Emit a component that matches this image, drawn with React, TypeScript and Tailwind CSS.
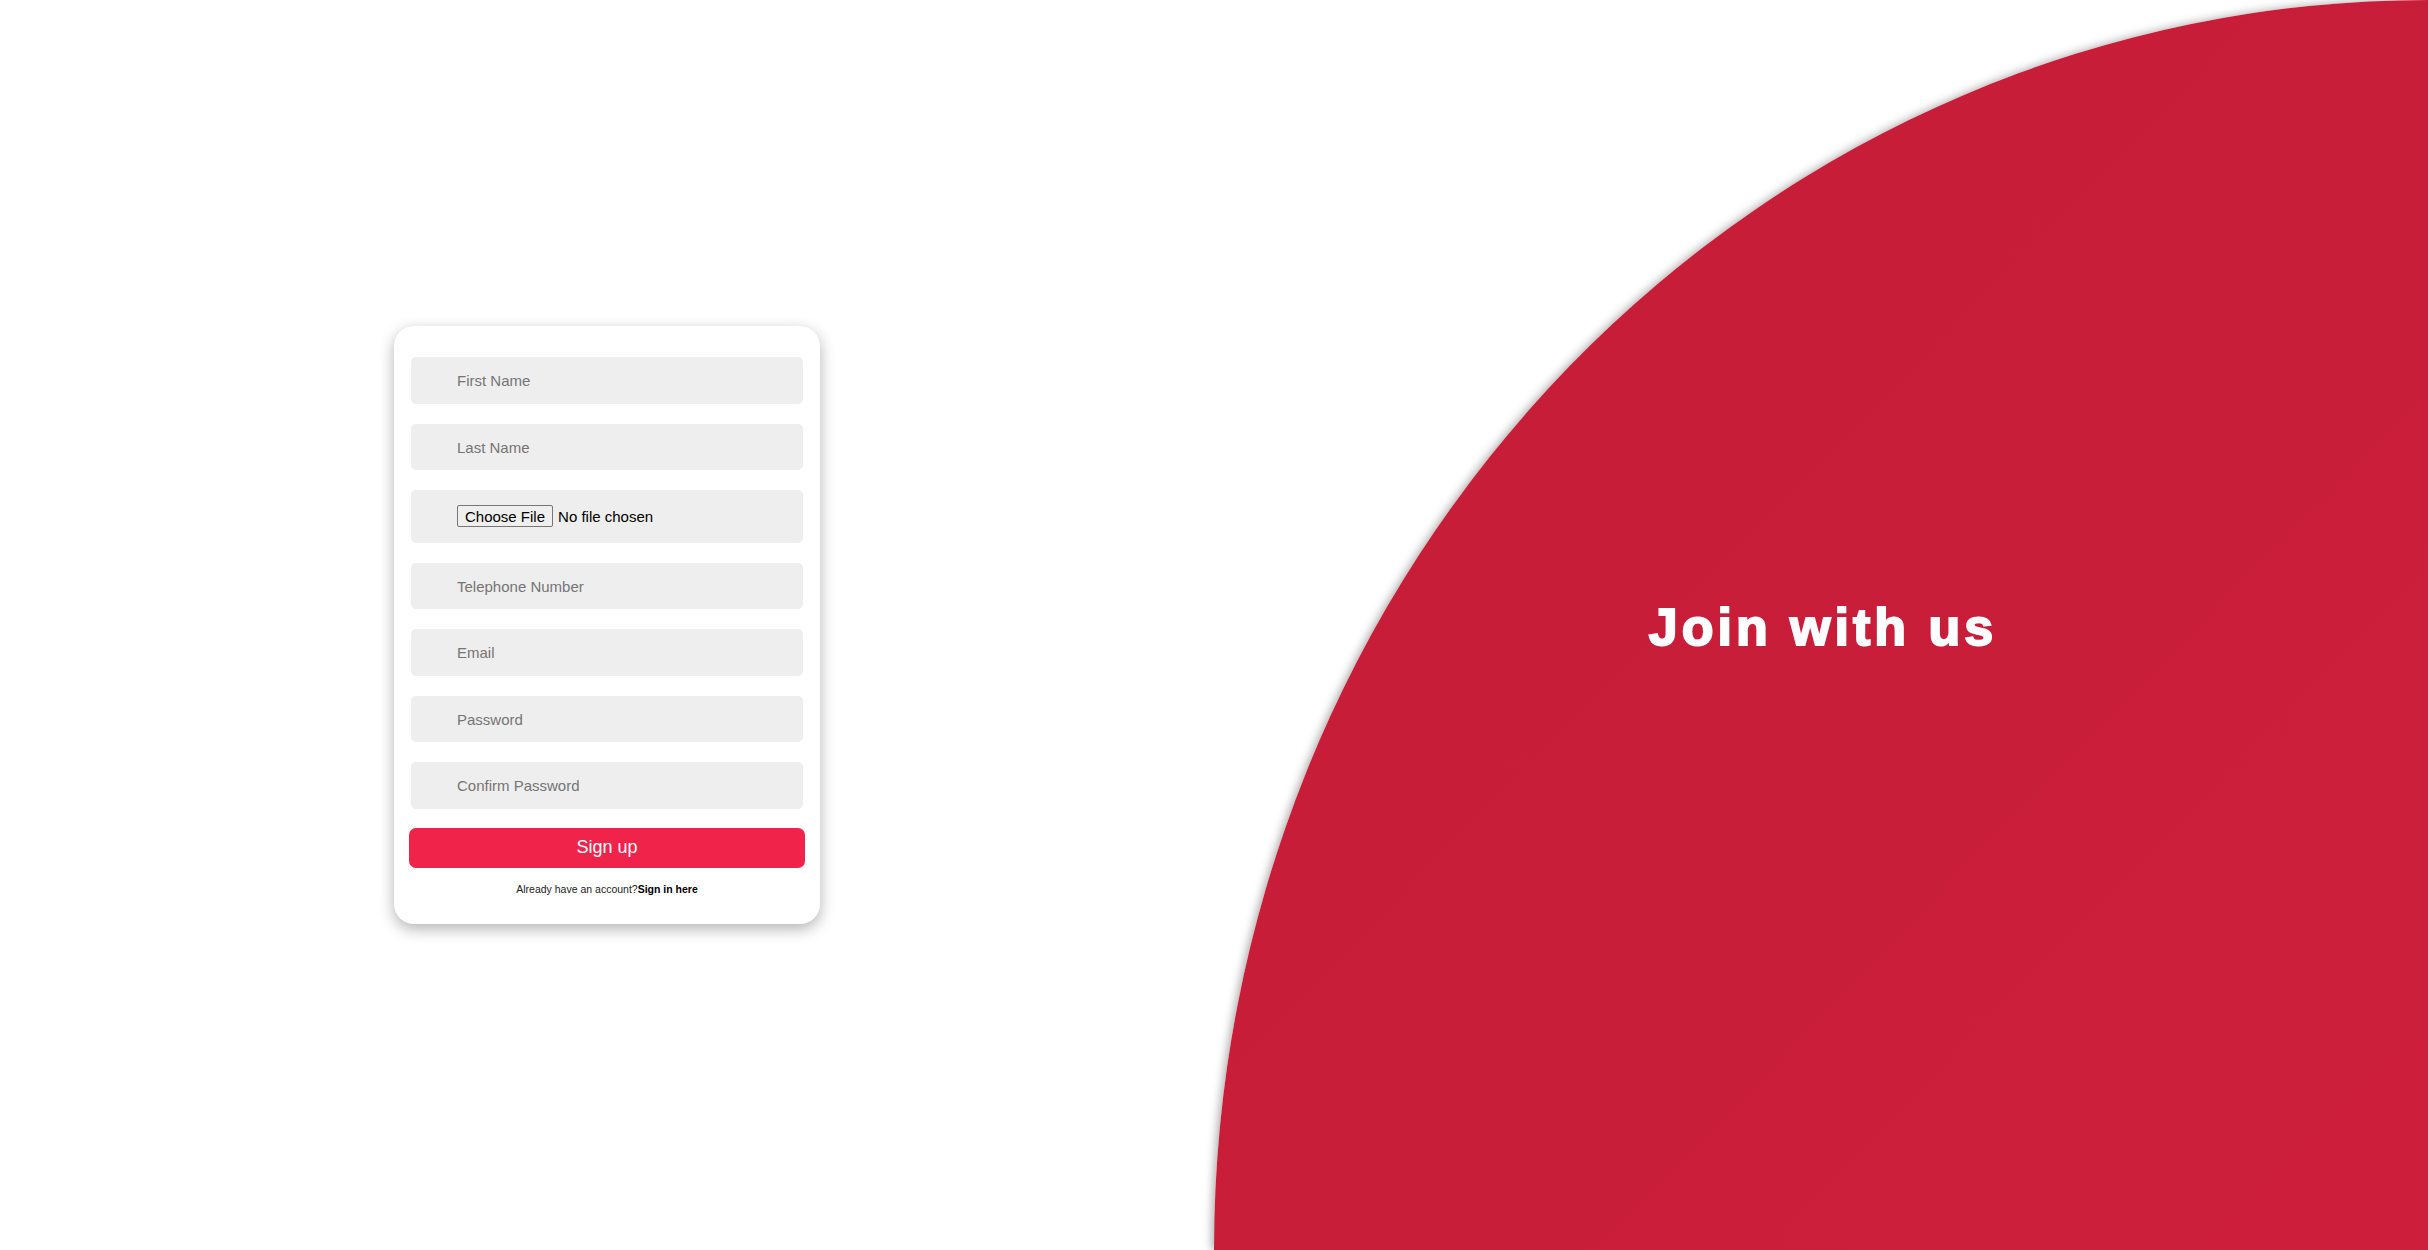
import React from "react";

const fields = [
  { type: "text", placeholder: "First Name" },
  { type: "text", placeholder: "Last Name" },
  { type: "file", placeholder: "" },
  { type: "tel", placeholder: "Telephone Number" },
  { type: "email", placeholder: "Email" },
  { type: "password", placeholder: "Password" },
  { type: "password", placeholder: "Confirm Password" },
];

function Field({ type, placeholder }: { type: string; placeholder: string }) {
  if (type === "file") {
    return (
      <input
        type="file"
        className="mx-[2px] block w-[392px] rounded-[5px] bg-[#eeeeee] py-[15px] pl-[46px] text-[15px] leading-[22px] text-black outline-none file:mr-[5px] file:rounded-[2px] file:border file:border-[#767676] file:bg-[#efefef] file:px-[7px] file:py-[1.5px] file:text-[15px] file:leading-[17px] file:text-black"
      />
    );
  }
  return (
    <input
      type={type}
      placeholder={placeholder}
      className="mx-[2px] block h-[46.5px] w-[392px] rounded-[5px] bg-[#eeeeee] pl-[46px] pr-4 text-[15px] text-black outline-none placeholder:text-[#757575]"
    />
  );
}

export default function App() {
  return (
    <main className="flex h-screen w-full overflow-hidden bg-white font-['Liberation_Sans',Arial,sans-serif]">
      {/* form side */}
      <div className="flex w-1/2 items-center justify-center">
        <form className="w-[426px] rounded-[20px] bg-white px-[15px] pb-[29px] pt-[31px] shadow-[0_5px_15px_rgba(0,0,0,0.3)]">
          <div className="flex flex-col gap-[20px]">
            {fields.map((f, i) => (
              <Field key={i} type={f.type} placeholder={f.placeholder} />
            ))}
          </div>

          <button
            type="button"
            className="mt-[19px] block h-[40px] w-full rounded-[7px] bg-[#f0234a] text-[18px] text-white"
          >
            Sign up
          </button>

          <p className="mt-[15px] text-center text-[10.5px] leading-[12px] text-[#222]">
            Already have an account?
            <span className="font-bold text-black">Sign in here</span>
          </p>
        </form>
      </div>

      {/* red side */}
      <div className="flex w-1/2 items-center justify-center rounded-tl-[100%] bg-gradient-to-br from-[#c31c37] to-[#cd1f3c] shadow-[-2px_0_10px_rgba(0,0,0,0.35)]">
        <h1 className="mt-1 pl-[4px] text-[52px] font-bold leading-none tracking-[4px] text-white [-webkit-text-stroke:2px_white]">
          Join with us
        </h1>
      </div>
    </main>
  );
}
